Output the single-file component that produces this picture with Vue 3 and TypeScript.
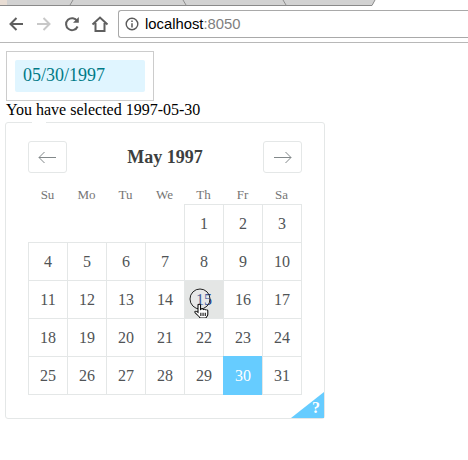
<template>
  <div class="page">
    <header class="chrome">
      <svg class="tabs" width="468" height="6" viewBox="0 0 468 6">
        <path d="M0 0H375L372 5H0Z" fill="#d2d2d2" />
        <path d="M0 0H7V5H0Z" fill="#e8ddd4" />
        <path d="M73 0L70 5M183 0L186 5M283 0L286 5" stroke="#8e8e8e" fill="none" />
        <path d="M0 5.500H372L375 0" stroke="#8a8a8a" fill="none" />
      </svg>
      <div class="toolbar">
        <div class="nav-slot">
          <svg width="16" height="16" viewBox="0 0 16 16">
            <path d="M15 8H2.500M8.500 2L2.500 8L8.500 14" fill="none" stroke="#5f5f5f" stroke-width="2" />
          </svg>
        </div>
        <div class="nav-slot">
          <svg width="16" height="16" viewBox="0 0 16 16">
            <path d="M1 8H13.500M7.500 2L13.500 8L7.500 14" fill="none" stroke="#c8c8c8" stroke-width="2" />
          </svg>
        </div>
        <div class="nav-slot">
          <svg width="16" height="16" viewBox="0 0 16 16">
            <path d="M13.600 10.500A6 6 0 1 1 13.200 5" fill="none" stroke="#5f5f5f" stroke-width="2" />
            <path d="M14.800 1V6.800H9Z" fill="#5f5f5f" />
          </svg>
        </div>
        <div class="nav-slot">
          <svg width="18" height="18" viewBox="0 0 18 18">
            <path d="M1.500 9.500L9 2.500L16.500 9.500M4.500 8V16H13.500V8" fill="none" stroke="#5f5f5f" stroke-width="2" />
          </svg>
        </div>
        <div class="omnibox">
          <svg width="14" height="14" viewBox="0 0 14 14">
            <circle cx="7" cy="7" r="5.800" fill="none" stroke="#5a5a5a" stroke-width="1.400" />
            <path d="M7 6.200V10.400M7 3.600V5" stroke="#5a5a5a" stroke-width="1.500" />
          </svg>
          <span class="host">localhost<span class="port">:8050</span></span>
        </div>
      </div>
    </header>

    <main class="content">
      <div class="date-input">
        <div class="date-value">05/30/1997</div>
      </div>
      <div>You have selected 1997-05-30</div>

      <section class="picker">
        <span class="caret"></span>
        <div class="month-head">
          <button class="arrow">
            <svg width="19" height="13" viewBox="0 0 19 13">
              <path d="M18 6.500H1M6.500 1L1 6.500L6.500 12" fill="none" stroke="#82888a" />
            </svg>
          </button>
          <strong class="caption">May 1997</strong>
          <button class="arrow">
            <svg width="19" height="13" viewBox="0 0 19 13">
              <path d="M1 6.500H18M12.500 1L18 6.500L12.500 12" fill="none" stroke="#82888a" />
            </svg>
          </button>
        </div>
        <div class="weekdays">
          <span v-for="name in weekdays" :key="name">{{ name }}</span>
        </div>
        <div class="days">
          <span v-for="n in 4" :key="'blank-' + n"></span>
          <div
            v-for="day in 31"
            :key="day"
            class="day"
            :class="{ hovered: day === 15, selected: day === 30 }"
          >
            {{ day }}
            <svg v-if="day === 15" class="cursor" width="28" height="34" viewBox="0 0 28 34">
              <circle cx="11" cy="11" r="10" fill="#fff" fill-opacity="0.15" stroke="#222" />
              <g transform="translate(-2 10.400) scale(1.100 0.800)">
                <path
                  d="M10 8.500c0-1.600 2.300-1.600 2.300 0V14l.4-.4c.7-.8 2-.5 2.200.3.800-.6 1.900-.3 2.100.5.900-.4 1.900.1 1.900 1v4.600c0 1.700-.8 2.700-1.400 3.500v1H11.500v-1c-1-1.300-3.700-4.800-4.300-6-.6-1.200.8-2.100 1.700-1.100l1.100 1.200Z"
                  fill="#fff"
                  stroke="#111"
                />
                <path d="M12.600 18v4M14.600 18v4M16.600 18v4" stroke="#111" />
              </g>
            </svg>
          </div>
        </div>
        <div class="help">?</div>
      </section>
    </main>
  </div>
</template>

<script setup lang="ts">
const weekdays: string[] = ['Su', 'Mo', 'Tu', 'We', 'Th', 'Fr', 'Sa']
</script>

<style>
html,
body {
  background: #fff;
  overflow: hidden;
}
</style>

<style scoped>
.page {
  width: 468px;
  height: 460px;
  font-family: 'Liberation Serif', 'Times New Roman', serif;
  font-size: 16px;
  color: #000;
}
.chrome {
  height: 43px;
  border-bottom: 1px solid #b8b8b8;
  box-sizing: border-box;
}
.tabs {
  display: block;
}
.toolbar {
  display: flex;
  align-items: center;
  height: 36px;
  padding-left: 2px;
}
.nav-slot {
  flex: none;
  display: flex;
  align-items: center;
  justify-content: center;
  width: 28px;
  height: 18px;
}
.omnibox {
  flex: 1;
  display: flex;
  align-items: center;
  gap: 6px;
  box-sizing: border-box;
  height: 28px;
  margin-left: 4px;
  padding-left: 6px;
  border: 1px solid #a9a9a9;
  border-right: none;
  border-radius: 3px 0 0 3px;
  font-family: 'Liberation Sans', Arial, sans-serif;
  font-size: 14.800px;
}
.port {
  color: #808080;
}
.content {
  padding: 8px 0 0 6px;
}
.date-input {
  box-sizing: border-box;
  width: 148px;
  height: 50px;
  padding: 8px;
  border: 1px solid #ccc;
}
.date-value {
  height: 32px;
  padding-left: 8px;
  border-radius: 2px;
  background: #e0f5ff;
  color: #007a87;
  font-size: 18px;
  line-height: 31px;
}
.picker {
  position: relative;
  box-sizing: border-box;
  width: 320px;
  height: 297px;
  margin: 3px 0 0 -1px;
  padding: 18px 22px 0;
  border: 1px solid #e4e7e7;
  border-radius: 3px;
}
.caret {
  position: absolute;
  top: -1px;
  left: 26px;
  width: 14px;
  height: 1px;
  background: #fff;
}
.month-head {
  display: flex;
  align-items: center;
  justify-content: space-between;
  width: 274px;
  height: 32px;
}
.arrow {
  display: flex;
  align-items: center;
  justify-content: center;
  box-sizing: border-box;
  width: 39px;
  height: 32px;
  padding: 0;
  border: 1px solid #e4e7e7;
  border-radius: 3px;
  background: #fff;
}
.caption {
  font-size: 18px;
  color: #3c3f40;
}
.weekdays {
  display: grid;
  grid-template-columns: repeat(7, 39px);
  margin-top: 13px;
  height: 18px;
  font-size: 13px;
  line-height: 17px;
  color: #757575;
  text-align: center;
}
.days {
  display: grid;
  grid-template-columns: repeat(7, 39px);
  grid-auto-rows: 38px;
}
.day {
  position: relative;
  display: flex;
  align-items: center;
  justify-content: center;
  margin: 0 -1px -1px 0;
  border: 1px solid #e4e7e7;
  color: #505456;
}
.day.hovered {
  background: #e4e6e5;
  color: #1f3f8a;
}
.day.selected {
  background: #66ccff;
  border-color: #66ccff;
  color: #fff;
}
.cursor {
  position: absolute;
  top: 7px;
  left: 4px;
}
.help {
  position: absolute;
  right: 0;
  bottom: 0;
  box-sizing: border-box;
  width: 33px;
  height: 26px;
  padding: 5px 4px 0 0;
  background: #66ccff;
  clip-path: polygon(100% 0, 100% 100%, 0 100%);
  color: #fff;
  font-weight: bold;
  font-size: 16px;
  line-height: 22px;
  text-align: right;
}
</style>
